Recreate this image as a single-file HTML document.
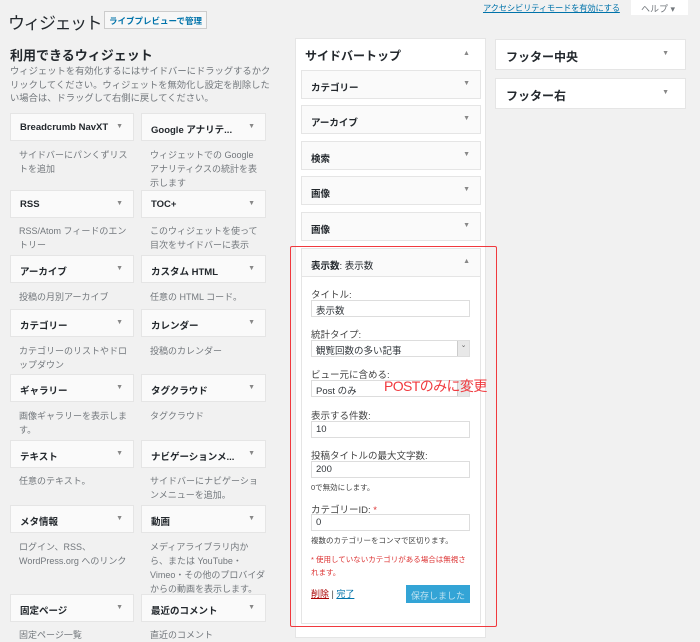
<!DOCTYPE html>
<html><head><meta charset="utf-8"><style>
*{margin:0;padding:0;box-sizing:border-box}
body{width:700px;height:639px;overflow:hidden;background:#f1f1f1;font-family:"Liberation Sans","Noto Sans CJK JP",sans-serif;color:#23282d;position:relative}
.a{position:absolute}
.w{position:absolute;background:#fafafa;border:1px solid #e5e5e5;height:28px;font-size:9.5px;font-weight:bold;padding:8px 0 0 9px;color:#23282d}
.w i,.s i{position:absolute;right:10px;top:9px;font-style:normal;font-size:7px;color:#888;font-weight:normal}
.d{position:absolute;font-size:9px;line-height:14px;color:#72777c;width:115px}
.s{position:absolute;left:301px;width:180px;height:29px;background:#fafafa;border:1px solid #e5e5e5;font-size:9.5px;font-weight:bold;padding:9px 0 0 9px}
.lb{position:absolute;left:311px;font-size:9.5px;color:#444}
.in{position:absolute;left:311px;width:159px;height:17px;background:#fff;border:1px solid #ddd;font-size:9.5px;padding:2px 0 0 4px;color:#32373c}
.sm{position:absolute;left:311px;font-size:7.5px;color:#444}
</style></head><body>
<div class="a" style="left:8px;top:9px;font-size:17px;letter-spacing:-1.5px;color:#23282d">ウィジェット</div>
<div class="a" style="left:104px;top:11px;height:18px;padding:3px 4px;border:1px solid #ccc;background:#f7f7f7;font-size:8.5px;color:#0073aa;font-weight:bold">ライブプレビューで管理</div>
<div class="a" style="left:483px;top:2px;font-size:8.3px;letter-spacing:-0.2px;color:#0073aa;text-decoration:underline">アクセシビリティモードを有効にする</div>
<div class="a" style="left:631px;top:0;width:57px;height:15px;background:#fff;font-size:9px;color:#72777c;padding:2px 0 0 10px">ヘルプ ▾</div>
<div class="a" style="left:10px;top:45px;font-size:13px;font-weight:bold">利用できるウィジェット</div>
<div class="a" style="left:10px;top:65px;width:268px;font-size:9.3px;line-height:13.5px;color:#72777c">ウィジェットを有効化するにはサイドバーにドラッグするかクリックしてください。ウィジェットを無効化し設定を削除したい場合は、ドラッグして右側に戻してください。</div>

<div class="w" style="left:10px;top:113px;width:124px">Breadcrumb NavXT<i>▼</i></div>
<div class="w" style="left:141px;top:113px;width:125px">Google アナリテ...<i>▼</i></div>
<div class="d" style="left:19px;top:148px">サイドバーにパンくずリストを追加</div>
<div class="d" style="left:150px;top:148px">ウィジェットでの Google アナリティクスの統計を表示します</div>
<div class="w" style="left:10px;top:190px;width:124px">RSS<i>▼</i></div>
<div class="w" style="left:141px;top:190px;width:125px">TOC+<i>▼</i></div>
<div class="d" style="left:19px;top:224px">RSS/Atom フィードのエントリー</div>
<div class="d" style="left:150px;top:224px">このウィジェットを使って目次をサイドバーに表示</div>
<div class="w" style="left:10px;top:255px;width:124px">アーカイブ<i>▼</i></div>
<div class="w" style="left:141px;top:255px;width:125px">カスタム HTML<i>▼</i></div>
<div class="d" style="left:19px;top:290px">投稿の月別アーカイブ</div>
<div class="d" style="left:150px;top:290px">任意の HTML コード。</div>
<div class="w" style="left:10px;top:309px;width:124px">カテゴリー<i>▼</i></div>
<div class="w" style="left:141px;top:309px;width:125px">カレンダー<i>▼</i></div>
<div class="d" style="left:19px;top:344px">カテゴリーのリストやドロップダウン</div>
<div class="d" style="left:150px;top:344px">投稿のカレンダー</div>
<div class="w" style="left:10px;top:374px;width:124px">ギャラリー<i>▼</i></div>
<div class="w" style="left:141px;top:374px;width:125px">タグクラウド<i>▼</i></div>
<div class="d" style="left:19px;top:409px">画像ギャラリーを表示します。</div>
<div class="d" style="left:150px;top:409px">タグクラウド</div>
<div class="w" style="left:10px;top:440px;width:124px">テキスト<i>▼</i></div>
<div class="w" style="left:141px;top:440px;width:125px">ナビゲーションメ...<i>▼</i></div>
<div class="d" style="left:19px;top:474px">任意のテキスト。</div>
<div class="d" style="left:150px;top:474px">サイドバーにナビゲーションメニューを追加。</div>
<div class="w" style="left:10px;top:505px;width:124px">メタ情報<i>▼</i></div>
<div class="w" style="left:141px;top:505px;width:125px">動画<i>▼</i></div>
<div class="d" style="left:19px;top:540px">ログイン、RSS、WordPress.org へのリンク</div>
<div class="d" style="left:150px;top:540px">メディアライブラリ内から、または YouTube・Vimeo・その他のプロバイダからの動画を表示します。</div>
<div class="w" style="left:10px;top:594px;width:124px">固定ページ<i>▼</i></div>
<div class="w" style="left:141px;top:594px;width:125px">最近のコメント<i>▼</i></div>
<div class="d" style="left:19px;top:628px">固定ページ一覧</div>
<div class="d" style="left:150px;top:628px">直近のコメント</div>

<div class="a" style="left:295px;top:38px;width:191px;height:600px;background:#fff;border:1px solid #e5e5e5"></div>
<div class="a" style="left:305px;top:47px;font-size:12px;font-weight:bold">サイドバートップ</div>
<div class="a" style="left:463px;top:50px;font-size:7px;color:#888">▲</div>
<div class="s" style="top:70px">カテゴリー<i>▼</i></div>
<div class="s" style="top:105px">アーカイブ<i>▼</i></div>
<div class="s" style="top:141px">検索<i>▼</i></div>
<div class="s" style="top:176px">画像<i>▼</i></div>
<div class="s" style="top:212px">画像<i>▼</i></div>
<div class="a" style="left:301px;top:248px;width:180px;height:376px;background:#fff;border:1px solid #e5e5e5"></div>
<div class="s" style="top:248px;height:29px">表示数<span style="font-weight:normal">: 表示数</span><i>▲</i></div>
<div class="lb" style="top:287px">タイトル:</div>
<div class="in" style="top:300px">表示数</div>
<div class="lb" style="top:327px">統計タイプ:</div>
<div class="in" style="top:340px">観覧回数の多い記事<span style="position:absolute;right:0;top:0;width:12px;height:15px;background:#e8e8e8;border-left:1px solid #ccc;font-size:7px;text-align:center;color:#666">⌄</span></div>
<div class="lb" style="top:367px">ビュー元に含める:</div>
<div class="in" style="top:380px">Post のみ<span style="position:absolute;right:0;top:0;width:12px;height:15px;background:#e8e8e8;border-left:1px solid #ccc"></span></div>
<div class="lb" style="top:408px">表示する件数:</div>
<div class="in" style="top:421px">10</div>
<div class="lb" style="top:448px">投稿タイトルの最大文字数:</div>
<div class="in" style="top:461px">200</div>
<div class="sm" style="top:482px">0で無効にします。</div>
<div class="lb" style="top:502px">カテゴリーID: <span style="color:#dc3232">*</span></div>
<div class="in" style="top:514px">0</div>
<div class="sm" style="top:535px">複数のカテゴリーをコンマで区切ります。</div>
<div class="a" style="left:311px;top:553px;width:160px;font-size:7.5px;line-height:13px;color:#dc3232">* 使用していないカテゴリがある場合は無視されます。</div>
<div class="a" style="left:311px;top:587px;font-size:9px;color:#444"><span style="color:#a00;text-decoration:underline">削除</span> | <span style="color:#0073aa;text-decoration:underline">完了</span></div>
<div class="a" style="left:406px;top:585px;width:64px;height:18px;background:#33a4d6;color:#bfe3f2;font-size:9px;text-align:center;padding-top:4px">保存しました</div>
<div class="a" style="left:290px;top:246px;width:207px;height:381px;border:1.5px solid #f0393e;border-radius:2px"></div>
<div class="a" style="left:384px;top:376px;font-size:14px;letter-spacing:-0.6px;color:#f0393e">POSTのみに変更</div>

<div class="a" style="left:495px;top:39px;width:191px;height:31px;background:#fff;border:1px solid #e5e5e5;font-size:12px;font-weight:bold;padding:8px 0 0 10px">フッター中央<span style="position:absolute;right:16px;top:10px;font-size:7px;color:#888;font-weight:normal">▼</span></div>
<div class="a" style="left:495px;top:78px;width:191px;height:31px;background:#fff;border:1px solid #e5e5e5;font-size:12px;font-weight:bold;padding:8px 0 0 10px">フッター右<span style="position:absolute;right:16px;top:10px;font-size:7px;color:#888;font-weight:normal">▼</span></div>
</body></html>
